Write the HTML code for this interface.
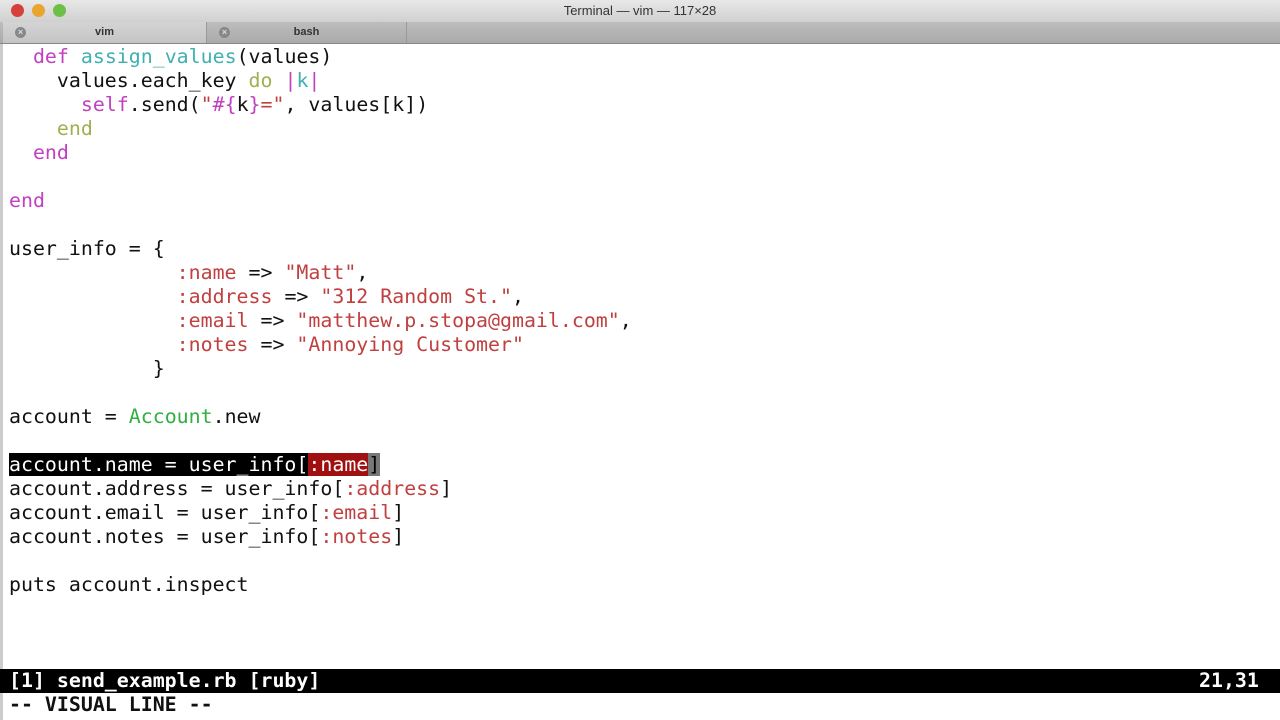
<!DOCTYPE html>
<html><head><meta charset="utf-8"><style>
body{margin:0;width:1280px;height:720px;overflow:hidden;background:#fff;position:relative;font-family:"Liberation Sans",sans-serif}
#title{position:absolute;left:0;top:0;width:1280px;height:22px;background:linear-gradient(#e8e8e8,#d0d0d0);text-align:center;font-size:13px;line-height:21px;color:#333}
.dot{position:absolute;top:4px;width:13px;height:13px;border-radius:50%}
#tabs{position:absolute;left:0;top:22px;width:1280px;height:21px;background:linear-gradient(#bdbdbd,#aaa);border-bottom:1px solid #888}
.tab{position:absolute;top:0;height:21px;font-size:11px;font-weight:bold;line-height:21px;text-align:center;color:#333;border-right:1px solid #999}
.x{position:absolute;left:12px;top:5px;width:11px;height:11px;border-radius:50%;background:#888;color:#ddd;font-size:9px;line-height:11px}
.mono{font-family:"DejaVu Sans Mono","Liberation Mono",monospace;font-size:19.9px;line-height:24px;white-space:pre}
#code{position:absolute;left:9px;top:45px;color:#111}
.k{color:#c040c0}.f{color:#40b0b0}.e{color:#a0b050}.s{color:#c04040}.c{color:#30b040}
#status{position:absolute;left:0;top:669px;width:1280px;height:24px;background:#000;color:#fff;font-weight:bold}
#lb{position:absolute;left:0;top:44px;width:3px;height:676px;background:#ccc}
</style></head><body>
<div id="title">Terminal — vim — 117×28
<div class="dot" style="left:11px;background:#d6403a"></div>
<div class="dot" style="left:32px;background:#e8a530"></div>
<div class="dot" style="left:53px;background:#6cc048"></div></div>
<div id="tabs">
<div class="tab" style="left:3px;width:203px;background:linear-gradient(#d4d4d4,#c4c4c4)"><span class="x">×</span>vim</div>
<div class="tab" style="left:207px;width:199px"><span class="x">×</span>bash</div>
</div>
<div id="lb"></div>
<div id="status" class="mono"><span style="position:absolute;left:9px;top:0">[1] send_example.rb [ruby]</span><span style="position:absolute;left:1199px;top:0">21,31</span></div>
<div class="mono" style="position:absolute;left:9px;top:693px;font-weight:bold;color:#111">-- VISUAL LINE --</div>
<div id="code" class="mono">  <span class="k">def</span> <span class="f">assign_values</span>(values)
    values.each_key <span class="e">do</span> <span class="k">|</span><span class="f">k</span><span class="k">|</span>
      <span class="k">self</span>.send(<span class="s">"</span><span class="k">#{</span>k<span class="k">}</span><span class="s">="</span>, values[k])
    <span class="e">end</span>
  <span class="k">end</span>

<span class="k">end</span>

user_info = {
              <span class="s">:name</span> =&gt; <span class="s">"Matt"</span>,
              <span class="s">:address</span> =&gt; <span class="s">"312 Random St."</span>,
              <span class="s">:email</span> =&gt; <span class="s">"matthew.p.stopa@gmail.com"</span>,
              <span class="s">:notes</span> =&gt; <span class="s">"Annoying Customer"</span>
            }

account = <span class="c">Account</span>.new

<span style="background:#000;color:#fff">account.name = user_info[<span style="background:#a01010">:name</span></span><span style="background:#777;color:#000">]</span>
account.address = user_info[<span class="s">:address</span>]
account.email = user_info[<span class="s">:email</span>]
account.notes = user_info[<span class="s">:notes</span>]

puts account.inspect</div>
</body></html>
